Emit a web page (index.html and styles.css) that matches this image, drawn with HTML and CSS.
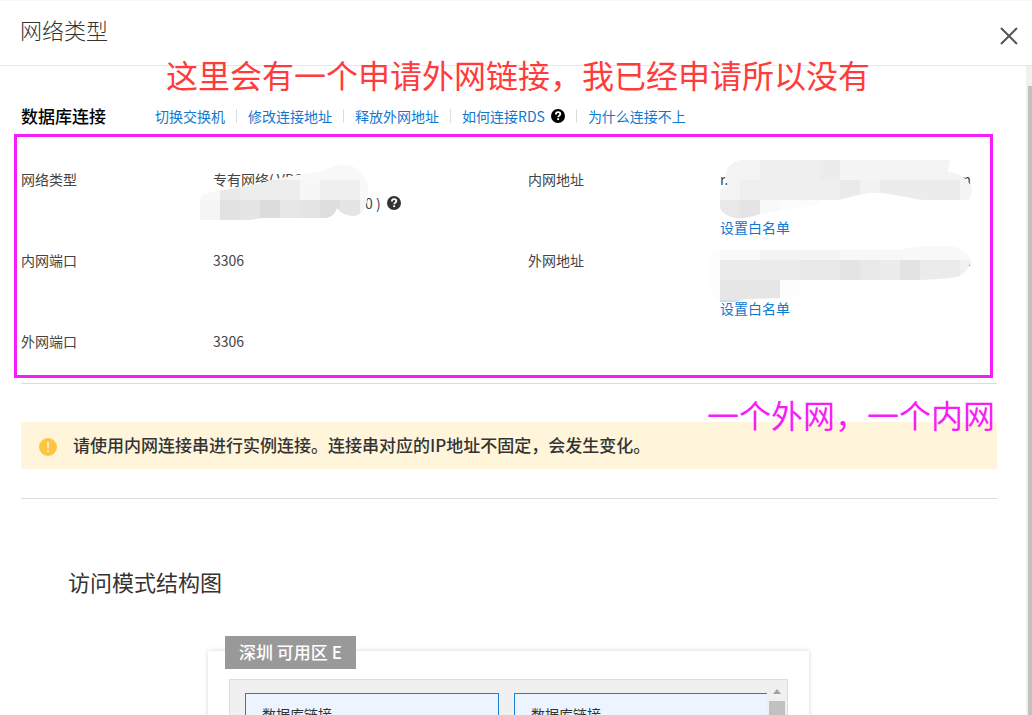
FILE: index.html
```html
<!DOCTYPE html>
<html lang="zh-CN">
<head>
<meta charset="utf-8">
<title>网络类型</title>
<link rel="stylesheet" href="styles.css">
</head>
<body>
<svg width="0" height="0" class="defs" aria-hidden="true">
  <symbol id="help" viewBox="0 0 14 14">
    <circle cx="7" cy="7" r="7" fill="currentColor"/>
    <path d="M4.9 5.4C4.9 3.9 5.8 3.2 7.1 3.2s2.2.8 2.2 1.9c0 1.5-2.1 1.6-2.1 3.2" fill="none" stroke="#fff" stroke-width="1.8"/>
    <rect x="6.2" y="9.3" width="1.9" height="1.8" fill="#fff"/>
  </symbol>
</svg>
<div class="dialog">
  <header class="dialog-header">
    <h1 class="dialog-title">网络类型</h1>
    <button class="close" type="button" aria-label="关闭">
      <svg width="18" height="18" viewBox="0 0 18 18"><path d="M1 1l16 16M17 1L1 17" stroke="#555" stroke-width="2" fill="none"/></svg>
    </button>
  </header>
  <div class="dialog-body">
    <main class="content">
      <p class="note note-red">这里会有一个申请外网链接，我已经申请所以没有</p>
      <div class="toolbar">
        <h2 class="toolbar-title">数据库连接</h2>
        <nav class="links">
          <a href="#">切换交换机</a>
          <a href="#">修改连接地址</a>
          <a href="#">释放外网地址</a>
          <a href="#">如何连接RDS<svg class="help help-black"><use href="#help"/></svg></a>
          <a href="#">为什么连接不上</a>
        </nav>
      </div>
      <dl class="details">
        <dt>网络类型</dt>
        <dd>
          <div>专有网络( VPC</div>
          <div class="vpc-id">0 )<svg class="help"><use href="#help"/></svg></div>
          <svg class="mosaic mosaic-vpc" width="170" height="56" viewBox="200 165 170 56">
            <clipPath id="c1"><path d="M200 200Q201 194 208 193L230 189 258 184 275 179 303 174 322 171 335 166Q345 163 354 167L361 173Q369 182 368 192L367 200Q365 214 354 216Q343 216 337 208Q334 217 326 218L261 218 250 220H200Z"/></clipPath>
            <g clip-path="url(#c1)">
              <path fill="#f8f8f8" d="M200 160h180v60H200z"/>
              <path fill="#e9e9e9" d="M220 180h20v20h-20z"/><path fill="#ededed" d="M240 180h60v20h-60z"/><path fill="#f7f7f7" d="M300 180h20v20h-20z"/><path fill="#efefef" d="M320 180h40v20h-40z"/>
              <path fill="#f5f5f5" d="M200 200h20v20h-20z"/><path fill="#e2e2e2" d="M220 200h20v20h-20z"/><path fill="#e5e5e5" d="M240 200h20v20h-20z"/><path fill="#dcdcdc" d="M260 200h20v20h-20z"/><path fill="#e7e7e7" d="M280 200h20v20h-20z"/><path fill="#e4e4e4" d="M300 200h20v20h-20z"/><path fill="#dedede" d="M320 200h20v20h-20z"/><path fill="#e5e5e5" d="M340 200h20v20h-20z"/><path fill="#f3f3f3" d="M360 200h20v20h-20z"/>
            </g>
          </svg>
        </dd>
        <dt>内网地址</dt>
        <dd>
          <div class="address"><span>r.</span><span>m</span></div>
          <a class="whitelist" href="#">设置白名单</a>
          <svg class="mosaic mosaic-inner" width="254" height="60" viewBox="718 160 254 60">
            <clipPath id="c2"><path d="M741 160H950L948 172 958 174Q971 180 972 191Q971 200 967 200H922L895 195Q878 191 862 194L838 200 817 205 778 211 760 214Q747 219 735 218Q722 215 720 208V192Q720 188 728 186L725 178Q727 162 741 160Z"/></clipPath>
            <g clip-path="url(#c2)">
              <path fill="#f4f4f4" d="M718 160h254v40H718z"/>
              <path fill="#efefef" d="M760 160h60v20h-60z"/><path fill="#ececec" d="M820 160h20v20h-20z"/>
              <path fill="#efefef" d="M740 180h100v20H740z"/><path fill="#eaeaea" d="M840 180h20v20h-20z"/><path fill="#f2f2f2" d="M860 180h20v20h-20z"/><path fill="#ececec" d="M880 180h80v20h-80z"/>
              <path fill="#e8e8e8" d="M718 200h22v20h-22z"/><path fill="#e4e4e4" d="M740 200h20v20h-20z"/><path fill="#f9f9f9" d="M760 200h20v20h-20z"/><path fill="#fcfcfc" d="M780 200h40v10h-40z"/>
            </g>
          </svg>
        </dd>
        <dt>内网端口</dt>
        <dd>3306</dd>
        <dt>外网地址</dt>
        <dd>
          <div class="address"><span>r</span><span>m</span></div>
          <a class="whitelist" href="#">设置白名单</a>
          <svg class="mosaic mosaic-outer" width="264" height="58" viewBox="708 245 264 58">
            <clipPath id="c3"><path d="M718 250H897L917 247Q938 245 955 247Q967 251 971 260Q968 273 958 277L940 279 920 280H800V296L780 298 745 299 735 302H720Q710 294 709 286V262Q711 252 718 250Z"/></clipPath>
            <g clip-path="url(#c3)">
              <path fill="#fdfdfd" d="M708 245h264v58H708z"/><path fill="#f9f9f9" d="M720 245h40v15h-40z"/><path fill="#f4f4f4" d="M760 245h80v15h-80z"/><path fill="#f8f8f8" d="M840 245h132v15H840z"/>
              <path fill="#ececec" d="M720 260h80v20h-80z"/><path fill="#e8e8e8" d="M800 260h40v20h-40z"/><path fill="#e4e4e4" d="M840 260h20v20h-20z"/><path fill="#e8e8e8" d="M860 260h20v20h-20z"/><path fill="#ececec" d="M880 260h20v20h-20z"/><path fill="#e3e3e3" d="M900 260h20v20h-20z"/><path fill="#ebebeb" d="M920 260h40v20h-40z"/><path fill="#f1f1f1" d="M960 260h12v20h-12z"/>
              <path fill="#e6e6e6" d="M720 280h60v20h-60z"/><path fill="#c4def2" d="M720 300h20v3h-20z"/>
            </g>
          </svg>
        </dd>
        <dt>外网端口</dt>
        <dd>3306</dd>
      </dl>
      <section class="notice-area">
        <div class="notice">
          <svg width="18" height="18" viewBox="0 0 18 18"><circle cx="9" cy="9" r="9" fill="#ffc440"/><path d="M9 4v6.500M9 12v2" stroke="#fff3d0" stroke-width="1.600"/></svg>
          <span>请使用内网连接串进行实例连接。连接串对应的IP地址不固定，会发生变化。</span>
        </div>
        <p class="note note-pink">一个外网，一个内网</p>
      </section>
      <h2 class="diagram-title">访问模式结构图</h2>
      <section class="zone">
        <span class="zone-label">深圳 可用区 E</span>
        <div class="zone-inner">
          <div class="cards">
            <div class="card">数据库链接</div>
            <div class="card card-cut">数据库链接</div>
          </div>
          <div class="mini-scroll"><i class="arrow"></i><i class="mini-thumb"></i></div>
        </div>
      </section>
    </main>
    <div class="scrollbar"><div class="thumb"></div></div>
  </div>
</div>
</body>
</html>
```
FILE: styles.css
```css
* { box-sizing: border-box; }
body {
  margin: 0;
  font-family: "Noto Sans CJK SC", sans-serif;
  font-size: 14px;
  line-height: 24px;
  color: #444;
  background: #fff;
}
h1, h2, p, dl, dd { margin: 0; }
a { color: #0f78cf; text-decoration: none; }
.defs { position: absolute; }
.dialog {
  display: flex;
  flex-direction: column;
  height: 100vh;
  overflow: hidden;
  border-top: 1px solid #f7f7f7;
}
.dialog-header {
  display: flex;
  flex: none;
  justify-content: space-between;
  align-items: center;
  height: 65px;
  padding: 0 14px 0 20px;
  border-bottom: 1px solid #e8e8e8;
}
.dialog-title {
  padding-bottom: 8px;
  font-size: 22px;
  font-weight: 300;
  line-height: 32px;
  color: #333;
}
.close {
  display: flex;
  padding: 6px 0 0;
  border: 0;
  background: none;
}
.dialog-body { display: flex; flex: 1; min-height: 0; }
.content {
  position: relative;
  flex: 1;
  min-width: 0;
  padding: 38px 29px 0 21px;
}
.scrollbar { flex: none; width: 6px; padding: 20px 0 0 2px; background: #f1f1f1; }
.thumb { height: 100%; background: #c1c1c1; }

.note {
  position: absolute;
  font-size: 32px;
  line-height: 40px;
  white-space: nowrap;
}
.note-red { top: -12px; left: 166px; color: #ff3b3b; }
.note-pink { top: 10px; right: 2px; color: #f81cf8; }

.toolbar { display: flex; align-items: center; }
.toolbar-title { width: 134px; font-size: 17px; font-weight: 500; line-height: 24px; color: #000; }
.links { display: flex; align-items: center; }
.links a { display: flex; align-items: center; line-height: 14px; padding-right: 11px; white-space: nowrap; }
.links a + a { padding-left: 11px; border-left: 1px solid #ddd; }
.help { width: 14px; height: 14px; margin-left: 6px; color: #333; flex: none; }
.help-black { color: #000; }

.details {
  position: relative;
  display: grid;
  grid-template-columns: 192px 315fr 192px 277fr;
  row-gap: 9px;
  padding: 39px 0 30px;
  border-bottom: 1px solid #ddd;
}
.details::after {
  content: "";
  position: absolute;
  inset: 6px 4px 5px -7px;
  border: 3px solid #f81cf8;
  pointer-events: none;
}
.details dd { position: relative; }
.vpc-id { display: flex; align-items: center; padding-left: 152px; }
.address { display: flex; justify-content: space-between; height: 48px; padding-right: 26px; }
.whitelist { display: block; position: relative; z-index: 1; }
.mosaic { position: absolute; }
.mosaic-vpc { left: -13px; top: -2px; }
.mosaic-inner { left: -2px; top: -7px; }
.mosaic-outer { left: -12px; top: -3px; }

.notice-area { position: relative; padding: 38px 0 29px; border-bottom: 1px solid #ddd; }
.notice {
  display: flex;
  align-items: center;
  gap: 16px;
  padding: 11px 18px 12px;
  font-size: 17px;
  font-weight: 500;
  color: #333;
  background: #fff5db;
}
.notice svg { flex: none; margin-top: 3px; }

.diagram-title { margin: 66px 0 54px 47px; font-size: 22px; font-weight: 400; line-height: 32px; color: #333; }
.zone {
  position: relative;
  width: 601px;
  max-width: 100%;
  height: 300px;
  margin-left: 187px;
  padding: 28px 21px 0;
  box-shadow: 0 0 5px rgba(0, 0, 0, .16);
}
.zone-label {
  position: absolute;
  top: -15px;
  left: 17px;
  padding: 4px 14px 5px;
  font-size: 17px;
  font-weight: 500;
  color: #fff;
  background: #999;
}
.zone-inner { display: flex; height: 260px; border: 1px solid #ddd; background: #f0f0f0; }
.cards { display: flex; flex: 1; gap: 15px; padding: 13px 0 0 15px; min-width: 0; }
.card { flex: 1; height: 160px; padding: 8px 16px; color: #333; border: 1px solid #1a80d8; background: #ecf5ff; }
.card-cut { border-right: 0; }
.mini-scroll { display: flex; flex-direction: column; align-items: center; width: 20px; padding: 9px 2px 0 2px; }
.arrow { border: 4px solid transparent; border-top: 0; border-bottom: 5px solid #a3a3a3; margin-bottom: 7px; }
.mini-thumb { width: 16px; height: 100px; background: #c1c1c1; }
```
